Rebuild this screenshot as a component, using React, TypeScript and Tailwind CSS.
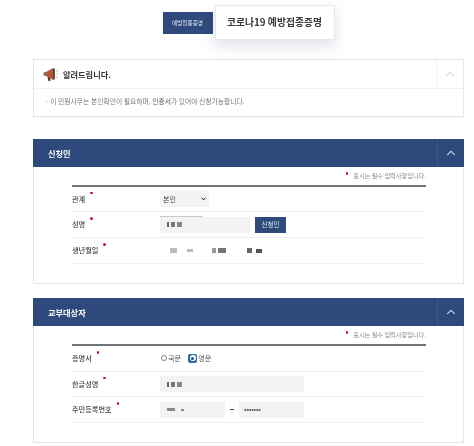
import React from 'react';
import { ChevronUp } from 'lucide-react';

const font = "font-['Noto_Sans_CJK_KR','Noto_Sans',sans-serif]";

const Dot = () => <span className="ml-[5px] mb-[12px] h-[2.5px] w-[2.5px] rounded-full bg-[#c8102e]" />;

const Row: React.FC<{ label: string; height: string; children: React.ReactNode }> = ({ label, height, children }) => (
  <div className={`mr-[2px] flex items-center border-b border-[#efefef] ${height}`}>
    <div className="flex w-[88px] items-center text-[7.2px] font-medium text-[#444] blur-[0.35px]">
      {label}
      <Dot />
    </div>
    <div className="flex flex-1 items-center">{children}</div>
  </div>
);

// redacted bits in the photo are just small smudges
const Smudge: React.FC<{ className: string }> = ({ className }) => <span className={`block blur-[0.6px] ${className}`} />;

const Name = () => (
  <div className="flex items-center gap-[2px] pl-[7px]">
    <Smudge className="h-[5px] w-[2px] bg-[#666]" />
    <Smudge className="h-[5px] w-[4px] bg-[#777]" />
    <Smudge className="h-[5px] w-[5px] bg-[#888]" />
  </div>
);

const Section: React.FC<{ title: string; children: React.ReactNode }> = ({ title, children }) => (
  <section className="h-[145px] border border-[#e6e6e6] border-t-0">
    <div className="-mx-px flex h-[28px] items-center justify-between bg-[#2e4a7c]">
      <h2 className="pl-[15px] text-[8.2px] font-bold text-white blur-[0.3px]">{title}</h2>
      <div className="flex h-full w-[27px] items-center justify-center border-l border-[#3a5587]">
        <ChevronUp className="h-[14px] w-[14px] text-[#eef2f8]" strokeWidth={1.8} />
      </div>
    </div>
    <div className="ml-[38px] mr-[37px]">
      <div className="flex h-[20px] items-center justify-end border-b-2 border-[#70757c] text-[6.2px] text-[#888] blur-[0.3px]">
        <span className="mb-[5px] mr-[5px] h-[2.5px] w-[2.5px] rounded-full bg-[#c8102e]" />
        표시는 필수 입력사항입니다.
      </div>
      {children}
    </div>
  </section>
);

export default function App() {
  return (
    <div className={`${font} h-[446px] w-[474px] overflow-hidden bg-white`}>
      <div className="flex h-[59px] items-start justify-center pl-[23px] pt-[5px]">
        <div className="mt-[7px] flex h-[22px] w-[50px] items-center justify-center bg-[#2e4a7c] text-[5.6px] text-[#dfe5ef] blur-[0.3px]">
          예방접종증명
        </div>
        <div className="ml-[2px] flex h-[35px] w-[120px] items-center justify-center border border-[#e4e8ee] bg-white text-[9.8px] font-bold text-[#3a3a3a] shadow-[0_6px_14px_rgba(70,90,130,0.18)]">
          <span className="blur-[0.25px]">코로나19 예방접종증명</span>
        </div>
      </div>

      <div className="ml-[33px] w-[431px]">
        <div className="h-[58px] border border-[#e6e6e6] shadow-[0_1px_1px_rgba(0,0,0,0.03)]">
          <div className="flex h-[29px] items-center justify-between border-b border-[#f1f1f1]">
            <div className="flex items-center pl-[9px]">
              <svg viewBox="0 0 16 14" className="h-[14px] w-[16px] blur-[0.2px]">
                <path d="M0.5 5.5 L4 4.5 L4 9.5 L0.5 8.5 Z" fill="#8a6f66" />
                <path d="M4 4.5 L10 1 L10 13 L4 9.5 Z" fill="#c4502f" />
                <rect x="10" y="1.5" width="1.8" height="11" fill="#3f3f3f" />
                <path d="M4.5 10 L7 10.6 L7.4 14 L5.4 14 Z" fill="#5b3226" />
                <path d="M13 4.2 L15 3.4 M13.3 7 L15.4 7 M13 9.8 L15 10.6" stroke="#9a9a9a" strokeWidth="0.7" />
              </svg>
              <span className="ml-[4px] text-[8.2px] font-bold text-[#333] blur-[0.25px]">알려드립니다.</span>
            </div>
            <div className="flex h-full w-[27px] items-center justify-center border-l border-[#f1f1f1]">
              <ChevronUp className="h-[14px] w-[14px] text-[#cfcfcf]" strokeWidth={1.8} />
            </div>
          </div>
          <p className="pl-[11px] pt-[7px] text-[6.8px] text-[#777] blur-[0.3px]">
            · 이 민원사무는 본인확인이 필요하며, <span className="text-[#555]">인증서</span>가 있어야 신청가능합니다.
          </p>
        </div>

        <div className="mt-[22px]">
          <Section title="신청인">
            <Row label="관계" height="h-[25px]">
              <div className="flex h-[16px] w-[49px] items-center justify-between bg-[#f3f3f3] px-[3px] text-[7px] text-[#444] blur-[0.25px]">
                본인
                <svg viewBox="0 0 8 6" className="h-[4px] w-[5px]">
                  <path d="M1 1 L4 4.5 L7 1" fill="none" stroke="#222" strokeWidth="1.6" />
                </svg>
              </div>
            </Row>
            <Row label="성명" height="h-[26px]">
              <div className="relative flex h-[16px] w-[90px] items-center bg-[#f3f3f3]">
                <span className="absolute left-0 top-[-1px] h-[1px] w-[43px] bg-[#ccc]" />
                <Name />
              </div>
              <button className="ml-[5px] flex h-[16px] w-[31px] items-center justify-center bg-[#2e4a7c] text-[6.5px] text-[#e6ebf3] blur-[0.25px]">
                신청인
              </button>
            </Row>
            <Row label="생년월일" height="h-[26px]">
              <div className="flex items-center pl-[10px]">
                <Smudge className="h-[5px] w-[7px] bg-[#bbb]" />
                <Smudge className="ml-[10px] h-[3px] w-[6px] bg-[#bbb]" />
                <Smudge className="ml-[19px] h-[5px] w-[4px] bg-[#999]" />
                <Smudge className="ml-[2px] h-[5px] w-[8px] bg-[#777]" />
                <Smudge className="ml-[21px] h-[5px] w-[5px] bg-[#666]" />
                <Smudge className="ml-[4px] h-[4px] w-[6px] bg-[#555]" />
              </div>
            </Row>
          </Section>
        </div>

        <div className="mt-[14px]">
          <Section title="교부대상자">
            <Row label="증명서" height="h-[26px]">
              <div className="flex items-center text-[7.2px] text-[#555]">
                <span className="ml-[1px] h-[6px] w-[6px] rounded-full border border-[#888]" />
                <span className="ml-[1px] blur-[0.25px]">국문</span>
                <span className="ml-[7px] flex h-[9px] w-[9px] items-center justify-center rounded-[2px] bg-[#2f6aa8] blur-[0.25px]">
                  <span className="flex h-[6px] w-[6px] items-center justify-center rounded-full bg-white">
                    <span className="h-[3.5px] w-[3.5px] rounded-full bg-[#1d4f86]" />
                  </span>
                </span>
                <span className="ml-[1px] blur-[0.25px]">영문</span>
              </div>
            </Row>
            <Row label="한글성명" height="h-[25px]">
              <div className="flex h-[16px] w-[144px] items-center bg-[#f3f3f3]">
                <Name />
              </div>
            </Row>
            <Row label="주민등록번호" height="h-[26px]">
              <div className="flex h-[16px] w-[65px] items-center bg-[#f3f3f3] pl-[7px]">
                <Smudge className="h-[3px] w-[8px] bg-[#888]" />
                <Smudge className="ml-[6px] h-[2px] w-[3px] bg-[#888]" />
              </div>
              <span className="ml-[5px] mr-[5px] h-[1.5px] w-[4px] bg-[#444]" />
              <div className="flex h-[16px] w-[65px] items-center bg-[#f3f3f3] pl-[5px] text-[7px] leading-none text-[#555]">
                •••••••
              </div>
            </Row>
          </Section>
        </div>
      </div>
    </div>
  );
}
